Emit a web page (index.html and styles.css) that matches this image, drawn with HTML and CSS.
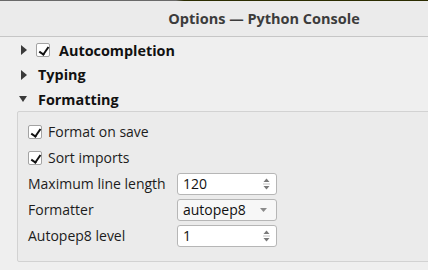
FILE: index.html
```html
<!DOCTYPE html>
<html lang="en">
<head>
    <meta charset="UTF-8">
    <title>Options — Python Console</title>
    <link rel="stylesheet" href="styles.css">
</head>
<body>
    <div class="topline"></div>
    <div class="titlebar">
        <span class="title">Options — Python Console</span>
    </div>

    <div class="content">
        <!-- Tree of option groups -->
        <div class="tree-row">
            <span class="arrow arrow-right"></span>
            <span class="check checked"></span>
            <span class="tree-label">Autocompletion</span>
        </div>
        <div class="tree-row">
            <span class="arrow arrow-right"></span>
            <span class="tree-label">Typing</span>
        </div>
        <div class="tree-row">
            <span class="arrow arrow-down"></span>
            <span class="tree-label">Formatting</span>
        </div>

        <!-- Formatting group -->
        <div class="group">
            <div class="form-row">
                <span class="check checked"></span>
                <span class="label">Format on save</span>
            </div>
            <div class="form-row">
                <span class="check checked"></span>
                <span class="label">Sort imports</span>
            </div>
            <div class="form-row field-row">
                <span class="label field-label">Maximum line length</span>
                <div class="field spinbox">
                    <span class="value">120</span>
                    <svg class="spin-arrows" width="9" height="16" viewBox="0 0 9 16">
                        <path d="M1.5 6 L4.5 2.5 L7.5 6 Z" fill="#7a7a7a"/>
                        <rect x="1" y="7.5" width="7" height="1" fill="#c4c4c4"/>
                        <path d="M1.5 10 L4.5 13.5 L7.5 10 Z" fill="#7a7a7a"/>
                    </svg>
                </div>
            </div>
            <div class="form-row field-row">
                <span class="label field-label">Formatter</span>
                <div class="field combo">
                    <span class="value">autopep8</span>
                    <svg class="combo-arrow" width="9" height="6" viewBox="0 0 9 6">
                        <path d="M1 1 L4.5 5 L8 1 Z" fill="#8a8a8a"/>
                    </svg>
                </div>
            </div>
            <div class="form-row field-row">
                <span class="label field-label">Autopep8 level</span>
                <div class="field spinbox">
                    <span class="value">1</span>
                    <svg class="spin-arrows" width="9" height="16" viewBox="0 0 9 16">
                        <path d="M1.5 6 L4.5 2.5 L7.5 6 Z" fill="#7a7a7a"/>
                        <rect x="1" y="7.5" width="7" height="1" fill="#c4c4c4"/>
                        <path d="M1.5 10 L4.5 13.5 L7.5 10 Z" fill="#7a7a7a"/>
                    </svg>
                </div>
            </div>
        </div>
    </div>
</body>
</html>
```

FILE: styles.css
```css
* {
    box-sizing: border-box;
    margin: 0;
    padding: 0;
}

html, body {
    width: 428px;
    height: 270px;
    overflow: hidden;
}

body {
    font-family: "Open Sans", "DejaVu Sans", sans-serif;
    font-size: 14px;
    color: #1c1c1c;
    background: #efefef;
}

.topline {
    height: 1px;
    background: linear-gradient(to right, #6a6a6a 0, #6a6a6a 176px, #2b2c00 184px, #2b2c00 100%);
}

.titlebar {
    height: 36px;
    display: flex;
    align-items: center;
    justify-content: center;
    padding-left: 100px;
    background: #ebebeb;
    border-bottom: 1px solid #c6c6c6;
}

.title {
    font-weight: bold;
    font-size: 14.5px;
    color: #3c3c3c;
}

.content {
    padding-top: 1px;
}

/* tree */

.tree-row {
    height: 24.5px;
    display: flex;
    align-items: center;
    padding-left: 20px;
}

.tree-label {
    font-weight: bold;
    font-size: 14.4px;
    color: #111;
}

.arrow {
    width: 9px;
    height: 10px;
    margin-right: 9px;
    position: relative;
}

.arrow-right::before {
    content: "";
    position: absolute;
    left: 1px;
    top: 0;
    border-left: 6px solid #3a3a3a;
    border-top: 5px solid transparent;
    border-bottom: 5px solid transparent;
}

.arrow-down::before {
    content: "";
    position: absolute;
    left: -1px;
    top: 2px;
    border-top: 6px solid #3a3a3a;
    border-left: 4.5px solid transparent;
    border-right: 4.5px solid transparent;
}

.tree-row .check {
    margin-left: -2px;
    margin-right: 9px;
}

/* checkbox */

.check {
    width: 14px;
    height: 14px;
    background: #fff;
    border: 1px solid #a3a3a3;
    border-radius: 2px;
    position: relative;
    flex-shrink: 0;
}

.check.checked::after {
    content: "";
    position: absolute;
    left: 4px;
    top: 1px;
    width: 4px;
    height: 8px;
    border-right: 2px solid #111;
    border-bottom: 2px solid #111;
    transform: rotate(35deg);
}

/* group */

.group {
    margin-left: 17px;
    margin-right: -10px;
    margin-top: -1px;
    height: 151px;
    background: #ebebeb;
    border: 1px solid #d2d2d2;
    border-radius: 2px;
    padding: 7px 0 0 10px;
}

.form-row {
    height: 26px;
    display: flex;
    align-items: center;
}

.form-row .check {
    margin-right: 6px;
}

.field-label {
    width: 149px;
}

.field {
    width: 100px;
    height: 22px;
    background: #fff;
    border: 1px solid #b6b6b6;
    border-radius: 3px;
    display: flex;
    align-items: center;
    justify-content: space-between;
    padding: 0 5px 0 5px;
}

.combo {
    background: #f7f7f7;
    padding-right: 8px;
}

.value {
    color: #111;
}
```
